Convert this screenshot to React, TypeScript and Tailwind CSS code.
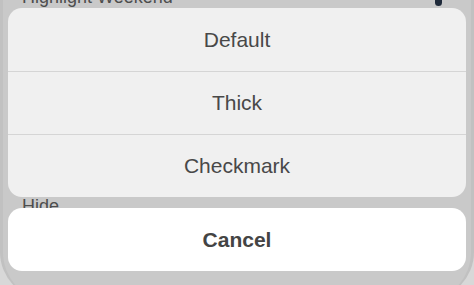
import React from "react";

const options = ["Default", "Thick", "Checkmark"];

export default function App() {
  return (
    <div
      className="relative w-[474px] h-[285px] overflow-hidden bg-[#d8d8d8]"
      style={{ fontFamily: '"Liberation Sans", Arial, sans-serif' }}
    >
      {/* dimmed settings screen underneath */}
      <div className="relative h-[300px] bg-[#c9c9c9] border-x-[3px] border-[#c1c1c1] rounded-b-[48px]">
        <span className="absolute left-[19px] top-[-16px] text-[18px] text-[#4d4d4d]">Highlight Weekend</span>
        <span className="absolute left-[432px] top-[-4px] w-[7px] h-[10px] rounded-full bg-[#1f2a3a]" />
        <span className="absolute left-[19px] top-[193px] text-[18px] text-[#4d4d4d]">Hide</span>
      </div>

      {/* action sheet */}
      <div className="absolute inset-x-[8px] top-[8px] flex flex-col gap-[11px]">
        <div className="flex flex-col rounded-[14px] bg-[#f0f0f0] overflow-hidden">
          {options.map((o, i) => (
            <div
              key={o}
              className={`flex items-center justify-center h-[63px] text-[21px] text-[#484848] ${
                i > 0 ? "border-t border-[#d5d5d5]" : ""
              }`}
            >
              {o}
            </div>
          ))}
        </div>
        <div className="flex items-center justify-center h-[63px] rounded-[14px] bg-white text-[21px] font-bold text-[#444]">
          Cancel
        </div>
      </div>
    </div>
  );
}
